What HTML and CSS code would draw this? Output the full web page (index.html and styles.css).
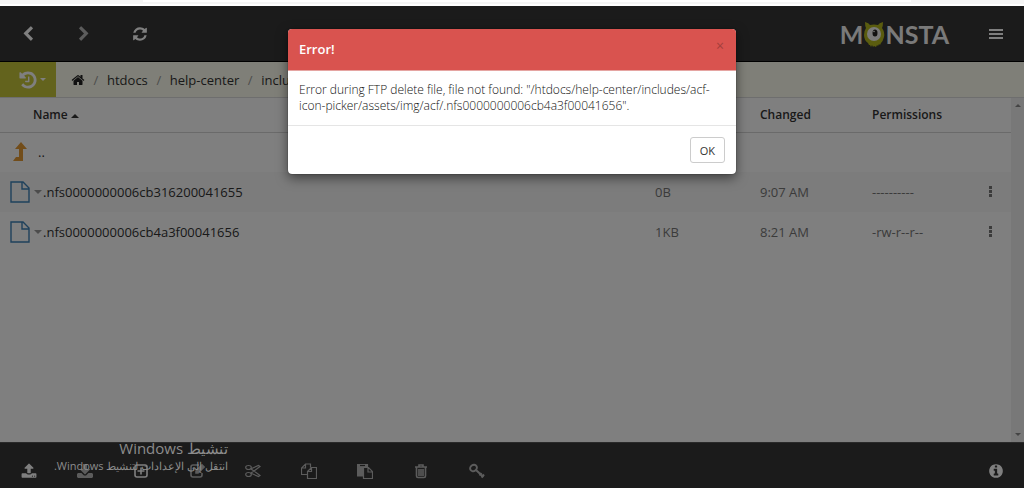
FILE: index.html
```html
<!DOCTYPE html>
<html lang="en">
<head>
  <meta charset="UTF-8">
  <meta name="viewport" content="width=device-width, initial-scale=1">
  <title>Monsta</title>
  <link rel="stylesheet" href="styles.css">
</head>
<body>
  <div class="browser-edge"><div class="address"></div></div>

  <div class="app">
    <header class="topbar">
      <button class="bar-btn" aria-label="Back">
        <svg class="icon" viewBox="0 0 1792 1792"><path d="M1427 301l-531 531 531 531q19 19 19 45t-19 45l-166 166q-19 19-45 19t-45-19l-742-742q-19-19-19-45t19-45l742-742q19-19 45-19t45 19l166 166q19 19 19 45t-19 45z"/></svg>
      </button>
      <button class="bar-btn off" aria-label="Forward">
        <svg class="icon" viewBox="0 0 1792 1792"><path d="M1363 877l-742 742q-19 19-45 19t-45-19l-166-166q-19-19-19-45t19-45l531-531-531-531q-19-19-19-45t19-45l166-166q19-19 45-19t45 19l742 742q19 19 19 45t-19 45z"/></svg>
      </button>
      <button class="bar-btn" aria-label="Refresh">
        <svg class="icon" viewBox="0 0 1792 1792"><path d="M1639 1056q0 5-1 7-64 268-268 434.5t-478 166.5q-146 0-282.5-55t-243.5-157l-129 129q-19 19-45 19t-45-19-19-45v-448q0-26 19-45t45-19h448q26 0 45 19t19 45-19 45l-137 137q71 66 161 102t187 36q134 0 250-65t186-179q11-17 53-117 8-23 30-23h192q13 0 22.5 9.5t9.5 22.5zm25-800v448q0 26-19 45t-45 19h-448q-26 0-45-19t-19-45 19-45l138-138q-148-137-349-137-134 0-250 65t-186 179q-11 17-53 117-8 23-30 23h-199q-13 0-22.5-9.5t-9.5-22.5v-7q65-268 270-434.5t480-166.5q146 0 284 55.5t245 156.5l130-129q19-19 45-19t45 19 19 45z"/></svg>
      </button>
      <a class="logo" href="#">
        <span>M</span>
        <svg class="eye" viewBox="0 0 22 26">
          <path class="fur" d="M2 1q4 1 5 3 4-1 8 0 1-2 5-3 0 4-1 6 3 4 2 9-1 4-3 6l-1 2-1-1-1 2-1-1-1 2-2-1-1 1-1-2-1 2-1-2-1 0-1-2q-4-3-4-8 0-4 2-7-1-2-1-6z"/>
          <circle class="ball" cx="11" cy="13" r="7"/>
          <ellipse class="pupil" cx="12" cy="12" rx="2.5" ry="3.500"/>
          <circle class="ball" cx="11" cy="10.500" r=".8"/>
        </svg>
        <span>NSTA</span>
      </a>
      <button class="bar-btn" aria-label="Menu">
        <svg class="icon" viewBox="0 0 16 16"><path d="M1 3h14v2H1zM1 7h14v2H1zM1 11h14v2H1z"/></svg>
      </button>
    </header>

    <nav class="crumbs">
      <button class="history" aria-label="History">
        <svg viewBox="0 0 1792 1792"><path d="M1664 896q0 156-61 298t-164 245-245 164-298 61q-172 0-327-72.5t-264-204.5q-7-10-6.5-22.5t8.5-20.5l137-138q10-9 25-9 16 2 23 12 73 95 179 147t225 52q104 0 198.5-40.5t163.5-109.5 109.5-163.5 40.5-198.5-40.5-198.5-109.5-163.5-163.5-109.5-198.5-40.5q-98 0-188 35.5t-160 101.5l137 138q31 30 14 69-17 40-59 40h-448q-26 0-45-19t-19-45v-448q0-42 40-59 39-17 69 14l130 129q107-101 244.5-156.5t284.5-55.5q156 0 298 61t245 164 164 245 61 298zm-640-288v448q0 14-9 23t-23 9h-320q-14 0-23-9t-9-23v-64q0-14 9-23t23-9h224v-352q0-14 9-23t23-9h64q14 0 23 9t9 23z"/></svg>
        <span class="caret"></span>
      </button>
      <ol class="path">
        <li><a href="#" aria-label="Home"><svg class="home" viewBox="0 0 1792 1792"><path d="M1472 992v480q0 26-19 45t-45 19h-384v-384h-256v384h-384q-26 0-45-19t-19-45v-480q0-1 .5-3t.5-3l575-474 575 474q1 2 1 6zm223-69l-62 74q-8 9-21 11h-3q-13 0-21-7l-692-577-692 577q-12 8-24 7-13-2-21-11l-62-74q-8-10-7-23.5t11-21.5l719-599q32-26 76-26t76 26l244 204v-195q0-14 9-23t23-9h192q14 0 23 9t9 23v408l219 182q10 8 11 21.5t-7 23.5z"/></svg></a></li>
        <li><a href="#">htdocs</a></li>
        <li><a href="#">help-center</a></li>
        <li><a href="#">includes</a></li>
      </ol>
    </nav>

    <main class="files">
      <table>
        <colgroup>
          <col>
          <col class="col-size">
          <col class="col-changed">
          <col class="col-perms">
          <col class="col-menu">
        </colgroup>
        <thead>
          <tr>
            <th class="name-head">Name <span class="caret up"></span></th>
            <th></th>
            <th>Changed</th>
            <th>Permissions</th>
            <th></th>
          </tr>
        </thead>
        <tbody>
          <tr>
            <td colspan="5">
              <div class="name">
                <svg class="level-up" viewBox="0 0 20 22"><path d="M11 1l6 7h-4v12H3l3-4h3V8H5z"/></svg>
                <a class="parent" href="#">..</a>
              </div>
            </td>
          </tr>
          <tr>
            <td>
              <div class="name">
                <svg class="file" viewBox="0 0 20 22"><path d="M1 1h12l6 6v14H1zM12 1v7h7"/></svg>
                <span class="caret"></span>
                <a href="#">.nfs0000000006cb316200041655</a>
              </div>
            </td>
            <td>0B</td>
            <td>9:07 AM</td>
            <td>----------</td>
            <td class="more"><button aria-label="More"><svg viewBox="0 0 4 12"><path d="M0 0h3v3H0zM0 4h3v3H0zM0 8h3v3H0z"/></svg></button></td>
          </tr>
          <tr>
            <td>
              <div class="name">
                <svg class="file" viewBox="0 0 20 22"><path d="M1 1h12l6 6v14H1zM12 1v7h7"/></svg>
                <span class="caret"></span>
                <a href="#">.nfs0000000006cb4a3f00041656</a>
              </div>
            </td>
            <td>1KB</td>
            <td>8:21 AM</td>
            <td>-rw-r--r--</td>
            <td class="more"><button aria-label="More"><svg viewBox="0 0 4 12"><path d="M0 0h3v3H0zM0 4h3v3H0zM0 8h3v3H0z"/></svg></button></td>
          </tr>
        </tbody>
      </table>
      <div class="scrollbar">
        <span class="caret up"></span>
        <span class="caret"></span>
      </div>
    </main>

    <footer class="toolbar">
      <button class="bar-btn" aria-label="Upload">
        <svg class="icon" viewBox="0 0 1792 1792"><path d="M1344 1472q0-26-19-45t-45-19-45 19-19 45 19 45 45 19 45-19 19-45zm256 0q0-26-19-45t-45-19-45 19-19 45 19 45 45 19 45-19 19-45zm128-224v320q0 40-28 68t-68 28h-1472q-40 0-68-28t-28-68v-320q0-40 28-68t68-28h427q21 56 70.5 92t110.5 36h256q61 0 110.5-36t70.5-92h427q40 0 68 28t28 68zm-325-648q-17 40-59 40h-256v448q0 26-19 45t-45 19h-256q-26 0-45-19t-19-45v-448h-256q-42 0-59-40-17-39 14-69l448-448q18-19 45-19t45 19l448 448q31 30 14 69z"/></svg>
      </button>
      <button class="bar-btn off" aria-label="Download">
        <svg class="icon" viewBox="0 0 16 16"><path d="M6 1h4v5h3.500L8 11.500 2.500 6H6zM1 10h3.500L7 12.500h2L11.500 10H15l1 1v3l-1 1H1l-1-1v-3z"/></svg>
      </button>
      <button class="bar-btn" aria-label="New folder">
        <svg class="icon line" viewBox="0 0 16 16"><rect x="2" y="2" width="12" height="12" rx="2"/><path d="M8 4.500v7M4.500 8h7"/></svg>
      </button>
      <button class="bar-btn off" aria-label="Edit">
        <svg class="icon line" viewBox="0 0 16 16"><path d="M10 2H4Q2 2 2 4v8q0 2 2 2h7q2 0 2-2v-2"/><path class="solid" d="M7 8l6-6 2 2-6 6H7z"/></svg>
      </button>
      <button class="bar-btn off" aria-label="Cut">
        <svg class="icon thin" viewBox="0 0 16 16"><ellipse cx="3.500" cy="4.500" rx="2.800" ry="2"/><ellipse cx="3.500" cy="11.500" rx="2.800" ry="2"/><path d="M6 6l3 2 6 4.500-1.500 1L5.500 10M6 10l3-2 6-4.500-1.500-1L5.500 6"/></svg>
      </button>
      <button class="bar-btn off" aria-label="Copy">
        <svg class="icon thin" viewBox="0 0 16 16"><path d="M6.500 11.500h-6V5l4-4h5v3.500M4.500 1v4h-4M6.500 8.500l4-4h5v11h-9zM10.500 4.500v4h-4"/></svg>
      </button>
      <button class="bar-btn off" aria-label="Paste">
        <svg class="icon thin" viewBox="0 0 16 16"><path class="solid" d="M.500 1.500h10V4H6v9H.500z"/><path d="M6.500 4.500h5l4 4v7h-9zM11 4.500V9h4.500"/><path class="gap" d="M3 2.500h5"/></svg>
      </button>
      <button class="bar-btn off" aria-label="Delete">
        <svg class="icon line" viewBox="0 0 16 16"><path d="M2 4h12M6 3.500V2h4v1.500M3.500 4v9q0 1.500 1.500 1.500h6q1.500 0 1.500-1.500V4M6 6v7M8 6v7M10 6v7"/></svg>
      </button>
      <button class="bar-btn off" aria-label="Permissions">
        <svg class="icon key" viewBox="0 0 16 16"><ellipse cx="4.500" cy="5" rx="3.500" ry="3" transform="rotate(-35 4.500 5)"/><path d="M7 7l7.500 7M10.500 12.500l2-2.500M12.500 14.500l2.500-3"/></svg>
      </button>
      <button class="bar-btn info" aria-label="Info">
        <svg class="icon" viewBox="0 0 1792 1792"><path d="M1152 1376v-160q0-14-9-23t-23-9h-96v-512q0-14-9-23t-23-9h-320q-14 0-23 9t-9 23v160q0 14 9 23t23 9h96v320h-96q-14 0-23 9t-9 23v160q0 14 9 23t23 9h448q14 0 23-9t9-23zm-128-896v-160q0-14-9-23t-23-9h-192q-14 0-23 9t-9 23v160q0 14 9 23t23 9h192q14 0 23-9t9-23zm640 416q0 209-103 385.500t-279.500 279.500-385.500 103-385.500-103-279.500-279.500-103-385.500 103-385.500 279.500-279.500 385.500-103 385.500 103 279.500 279.500 103 385.500z"/></svg>
      </button>
    </footer>

    <div class="backdrop">
      <div class="modal" role="dialog" aria-labelledby="modal-title">
        <div class="modal-header">
          <h4 id="modal-title">Error!</h4>
          <button class="close" aria-label="Close">×</button>
        </div>
        <p class="modal-body">Error during FTP delete file, file not found: "/htdocs/help-center/includes/acf-icon-picker/assets/img/acf/.nfs0000000006cb4a3f00041656".</p>
        <div class="modal-footer">
          <button class="ok">OK</button>
        </div>
      </div>
    </div>
  </div>

  <div class="activate" dir="rtl" lang="ar">
    <strong>تنشيط Windows</strong>
    <span>انتقل إلى الإعدادات لتنشيط Windows.</span>
  </div>
</body>
</html>
```
FILE: styles.css
```css
:root {
  --bar: #363636;
  --light: #fff;
  --muted: #b8b8b8;
  --olive: #c6c63a;
  --danger: #d9534f;
  --text: #333;
}

* {
  box-sizing: border-box;
}

body {
  margin: 0;
  height: 100vh;
  display: flex;
  flex-direction: column;
  overflow: hidden;
  font-family: "Open Sans", "Noto Sans", sans-serif;
  font-size: 13px;
  color: var(--text);
}

button {
  font: inherit;
  border: 0;
  padding: 0;
  background: none;
  cursor: pointer;
}

a {
  color: inherit;
  text-decoration: none;
}

/* bottom edge of the browser chrome */
.browser-edge {
  height: 6px;
  padding: 0 11% 0 14%;
  background: #f5f5f5;
  border-bottom: 2px solid #fff;
}
.address {
  height: 2px;
  background: #fff;
}

.app {
  flex: 1;
  min-height: 0;
  position: relative;
  display: flex;
  flex-direction: column;
  background: #fff;
}

/* top bar and bottom toolbar */
.topbar,
.toolbar {
  display: flex;
  background: var(--bar);
}
.topbar {
  height: 56px;
  align-items: center;
  border-bottom: 1px solid #000;
}
.toolbar {
  height: 46px;
  padding: 12px 0 0 1px;
  align-items: flex-start;
  border-top: 1px solid #555;
}
.bar-btn {
  width: 56px;
  height: 32px;
  display: flex;
  align-items: center;
  justify-content: center;
  color: var(--light);
}
.bar-btn.off {
  color: var(--muted);
}
.info {
  margin-left: auto;
}
.icon {
  width: 16px;
  height: 16px;
  fill: currentColor;
}
.line,
.thin,
.key {
  fill: none;
  stroke: currentColor;
  stroke-width: 2;
}
.line {
  stroke-width: 1.6;
}
.thin {
  stroke-width: 1.2;
}
.solid {
  fill: currentColor;
}
.gap {
  stroke: var(--bar);
}

.logo {
  margin-left: auto;
  margin-right: 19px;
  display: flex;
  align-items: center;
  font-family: Lato, sans-serif;
  font-size: 25px;
  font-weight: 700;
  line-height: 28px;
  color: #f4f4f4;
}
.eye {
  width: 22px;
  height: 26px;
}
.fur {
  fill: #b4b81e;
}
.ball {
  fill: #f4f4f4;
}
.pupil {
  fill: #222;
}

/* breadcrumb */
.crumbs {
  height: 36px;
  display: flex;
  background: #fffff0;
  border-bottom: 1px solid #ddd;
}
.history {
  width: 56px;
  padding-left: 8px;
  display: flex;
  align-items: center;
  justify-content: center;
  gap: 2px;
  background: var(--olive);
  color: #fff;
}
.history svg {
  width: 20px;
  height: 20px;
  fill: currentColor;
}
.path {
  margin: 0;
  padding: 0 0 0 15px;
  display: flex;
  align-items: center;
  list-style: none;
}
.path li {
  display: flex;
  align-items: center;
}
.path li + li::before {
  content: "/";
  width: 22px;
  text-align: center;
  color: #999;
}
.home {
  display: block;
  width: 14px;
  height: 14px;
  fill: #222;
}

.caret {
  display: inline-block;
  border-left: 4px solid transparent;
  border-right: 4px solid transparent;
  border-top: 4px solid currentColor;
}
.caret.up {
  border-top: 0;
  border-bottom: 4px solid currentColor;
  vertical-align: middle;
}
.history .caret,
.scrollbar .caret {
  border-left-width: 3px;
  border-right-width: 3px;
  border-top-width: 3px;
}
.scrollbar .up {
  border-top-width: 0;
  border-bottom-width: 3px;
}

/* file list */
.files {
  flex: 1;
  min-height: 0;
  display: flex;
}
table {
  flex: 1;
  align-self: flex-start;
  table-layout: fixed;
  border-collapse: collapse;
}
.col-size {
  width: 105px;
}
.col-changed {
  width: 112px;
}
.col-perms {
  width: 106px;
}
.col-menu {
  width: 41px;
}
th,
td {
  padding: 0 8px;
  text-align: left;
}
th {
  height: 34px;
  font-size: 12px;
  font-weight: 600;
  border-bottom: 1px solid #d4d4d4;
}
.name-head {
  padding-left: 33px;
}
td {
  height: 40px;
  color: #777;
}
tbody tr:nth-child(even) {
  background: #f8f8f8;
}
.name {
  display: flex;
  align-items: center;
  gap: 1px;
  padding-left: 2px;
  color: var(--text);
}
.name .caret {
  margin-left: 3px;
  color: #999;
}
.file,
.level-up {
  width: 20px;
  height: 22px;
}
.file {
  fill: none;
  stroke: #3d82b8;
  stroke-width: 1.4;
}
.level-up {
  fill: #e59a35;
}
.parent {
  padding-left: 7px;
}
.more button {
  display: block;
  margin: 0 auto;
}
.more svg {
  display: block;
  width: 4px;
  height: 12px;
  fill: #777;
}
.scrollbar {
  width: 13px;
  padding: 6px 0;
  display: flex;
  flex-direction: column;
  align-items: center;
  justify-content: space-between;
  background: #f1f1f1;
  color: #888;
}

/* error dialog */
.backdrop {
  position: absolute;
  inset: 0;
  padding: 23px 16px;
  background: rgba(0, 0, 0, 0.5);
}
.modal {
  max-width: 448px;
  margin: 0 auto;
  background: #fff;
  border-radius: 4px;
  box-shadow: 0 4px 12px rgba(0, 0, 0, 0.5), 0 0 1px #000;
  overflow: hidden;
}
.modal-header {
  padding: 10px 11px;
  display: flex;
  justify-content: space-between;
  background: var(--danger);
  border-bottom: 1px solid #e5a5a2;
}
.modal-header h4 {
  margin: 0;
  font-size: 13px;
  font-weight: 600;
  line-height: 21px;
  color: #fff;
}
.close {
  width: 10px;
  height: 14px;
  font-size: 14px;
  line-height: 14px;
  color: #a43f3c;
}
.modal-body {
  margin: 0;
  padding: 11px;
  font-size: 12px;
  font-weight: 300;
  line-height: 16px;
  color: #111;
}
.modal-footer {
  padding: 11px;
  display: flex;
  justify-content: flex-end;
  border-top: 1px solid #e5e5e5;
}
.ok {
  height: 26px;
  padding: 0 9px;
  font-size: 11px;
  color: var(--text);
  background: #fff;
  border: 1px solid #ccc;
  border-radius: 3px;
}

/* system notice floating over the toolbar */
.activate {
  position: absolute;
  left: 0;
  bottom: 15px;
  width: 228px;
  display: flex;
  flex-direction: column;
  color: #8c8c8c;
  pointer-events: none;
}
.activate strong {
  font-size: 15px;
  font-weight: 400;
  line-height: 20px;
}
.activate span {
  font-size: 11px;
  line-height: 15px;
  white-space: nowrap;
}
```
